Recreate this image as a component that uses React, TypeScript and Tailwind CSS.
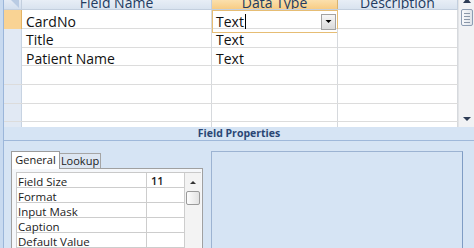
import { ReactNode } from 'react';

type FieldRow = { name: string; type: string; h: string };

const fieldRows: FieldRow[] = [
  { name: 'CardNo', type: 'Text', h: 'h-[19px]' },
  { name: 'Title', type: 'Text', h: 'h-[19px]' },
  { name: 'Patient Name', type: 'Text', h: 'h-[18px]' },
  { name: '', type: '', h: 'h-[19px]' },
  { name: '', type: '', h: 'h-[19px]' },
  { name: '', type: '', h: 'h-[18px]' },
  { name: '', type: '', h: 'h-[19px]' },
];

const properties = [
  { name: 'Field Size', value: '11' },
  { name: 'Format', value: '' },
  { name: 'Input Mask', value: '' },
  { name: 'Caption', value: '' },
  { name: 'Default Value', value: '' },
];

function HeaderCell({ label, active }: { label: string; active?: boolean }) {
  return (
    <div
      className={
        active
          ? 'flex h-full justify-center overflow-hidden border-r border-[#d9b36e] bg-gradient-to-b from-[#fbe0ad] to-[#f7cc84]'
          : 'flex h-full justify-center overflow-hidden border-r border-[#c3cfde] bg-gradient-to-b from-[#e8eef6] to-[#d9e3ef]'
      }
    >
      <span className="-mt-[6px] text-[14px] leading-[17px] text-[#233b60]">{label}</span>
    </div>
  );
}

function DownTriangle({ className }: { className: string }) {
  return (
    <svg width="8" height="4" viewBox="0 0 8 4" className={className}>
      <path d="M0 0H8L4 4Z" fill="currentColor" />
    </svg>
  );
}

function UpTriangle({ className }: { className: string }) {
  return (
    <svg width="6" height="3" viewBox="0 0 6 3" className={className}>
      <path d="M0 3H6L3 0Z" fill="currentColor" />
    </svg>
  );
}

function Cell({ children, className }: { children?: ReactNode; className?: string }) {
  return (
    <div className={`flex items-center border-r border-[#d6d9dd] pl-[4px] text-[14px] text-[#111] ${className ?? ''}`}>
      {children}
    </div>
  );
}

export default function App() {
  return (
    <div className="flex h-[248px] w-[474px] overflow-hidden bg-[#d6e4f4] font-['Open_Sans',sans-serif]">
      <div className="w-[4px] shrink-0 border-r border-[#9bb6da] bg-[#c8daf0]" />

      <div className="flex w-[470px] flex-col">
        {/* design grid */}
        <div className="flex h-[132px] overflow-hidden bg-white">
          <div className="w-[454px]">
            <div className="grid h-[10px] grid-cols-[18px_190px_126px_120px] border-b border-[#c3cfde]">
              <div className="relative h-full border-r border-[#c3cfde] bg-gradient-to-b from-[#e4ebf5] to-[#d3dfee]">
                <div className="absolute right-[2px] top-0 h-0 w-0 border-l-[8px] border-t-[8px] border-l-transparent border-t-[#b9cbe3]" />
              </div>
              <HeaderCell label="Field Name" />
              <HeaderCell label="Data Type" active />
              <HeaderCell label="Description" />
            </div>

            {fieldRows.map((row, i) => (
              <div
                key={i}
                className={`grid ${row.h} grid-cols-[18px_190px_126px_120px] border-b border-[#dcdcdc]`}
              >
                <div
                  className={
                    i === 0
                      ? 'border-r border-[#e2b366] bg-[#f9d394]'
                      : 'border-r border-[#c7d3e2] bg-[#e1e9f4]'
                  }
                />
                <Cell>{row.name}</Cell>
                {i === 0 ? (
                  <div className="flex items-center justify-between border border-[#e6bd74] pl-[3px] pr-[1px] text-[14px] text-[#111]">
                    <span className="flex items-center">
                      Text
                      <span className="ml-[1px] h-[15px] w-px bg-black" />
                    </span>
                    <span className="flex h-[16px] w-[15px] items-center justify-center border border-[#a3a3a3] bg-gradient-to-b from-[#f7f7f7] to-[#dadada]">
                      <DownTriangle className="h-[3px] w-[7px] text-black" />
                    </span>
                  </div>
                ) : (
                  <Cell>{row.type}</Cell>
                )}
                <Cell />
              </div>
            ))}
          </div>

          {/* vertical scrollbar */}
          <div className="flex w-[16px] flex-col items-center border-l border-[#e2e4e7] bg-[#f1f2f4]">
            <div className="-mt-[2px] h-0 w-0 border-x-[4px] border-b-[5px] border-x-transparent border-b-[#2e3c55]" />
            <div className="mt-[6px] flex h-[17px] w-[12px] flex-col items-center justify-center gap-[2px] rounded-[2px] border border-[#8d9db3] bg-gradient-to-r from-[#f8f9fb] to-[#dfe4ea]">
              <span className="h-px w-[6px] bg-[#8a97a8]" />
              <span className="h-px w-[6px] bg-[#8a97a8]" />
              <span className="h-px w-[6px] bg-[#8a97a8]" />
              <span className="h-px w-[6px] bg-[#8a97a8]" />
            </div>
            <div className="flex-1" />
            <DownTriangle className="mb-[6px] h-[4px] w-[8px] text-[#2e3c55]" />
          </div>
        </div>

        {/* field properties bar */}
        <div className="flex h-[14px] items-center justify-center border-b border-[#9fb8da] text-[10.5px] font-bold text-[#2a4674]">
          Field Properties
        </div>

        <div className="flex flex-1">
          {/* property sheet */}
          <div className="ml-[7px] mt-[9px] flex w-[192px] flex-col">
            <div className="flex h-[18px] items-end">
              <div className="relative z-10 -mb-px flex h-[18px] w-[49px] items-center justify-center border border-b-0 border-[#9c9c9c] bg-white text-[11px] text-[#1a1a1a]">
                General
              </div>
              <div className="flex h-[15px] w-[41px] items-center justify-center border border-b-0 border-l-0 border-[#a5a5a5] bg-[#dde6f2] text-[11px] text-[#1a1a1a]">
                Lookup
              </div>
            </div>
            <div className="flex flex-1 border border-b-0 border-[#a0a0a0] bg-[#f5f7fa] pl-[4px] pt-[3px]">
              <div className="flex w-[185px] border-l border-t border-[#c9c9c9]">
                <div className="w-[167px] bg-white">
                  {properties.map((p) => (
                    <div key={p.name} className="grid h-[15px] grid-cols-[130px_37px] border-b border-[#cdcdcd]">
                      <div className="flex items-center border-r border-[#cdcdcd] pl-[1px] text-[11.5px] text-[#1c1c1c]">
                        {p.name}
                      </div>
                      <div className="flex items-center pl-[4px] text-[11px] font-semibold text-[#1c1c1c]">
                        {p.value}
                      </div>
                    </div>
                  ))}
                </div>
                <div className="flex w-[18px] flex-col items-center border-l border-[#cdcdcd] bg-[#f3f3f3]">
                  <div className="flex h-[18px] items-center">
                    <UpTriangle className="h-[3px] w-[6px] text-[#333]" />
                  </div>
                  <div className="h-[14px] w-[14px] rounded-[2px] border border-[#9a9a9a] bg-gradient-to-r from-[#fdfdfd] to-[#e2e2e2]" />
                </div>
              </div>
            </div>
          </div>

          {/* help area */}
          <div className="ml-[8px] mt-[10px] w-[252px] border-x border-t border-l-[#9cb3d2] border-r-[#7f9cc4] border-t-[#9cb3d2] bg-[#d6e4f4]" />
        </div>
      </div>
    </div>
  );
}
